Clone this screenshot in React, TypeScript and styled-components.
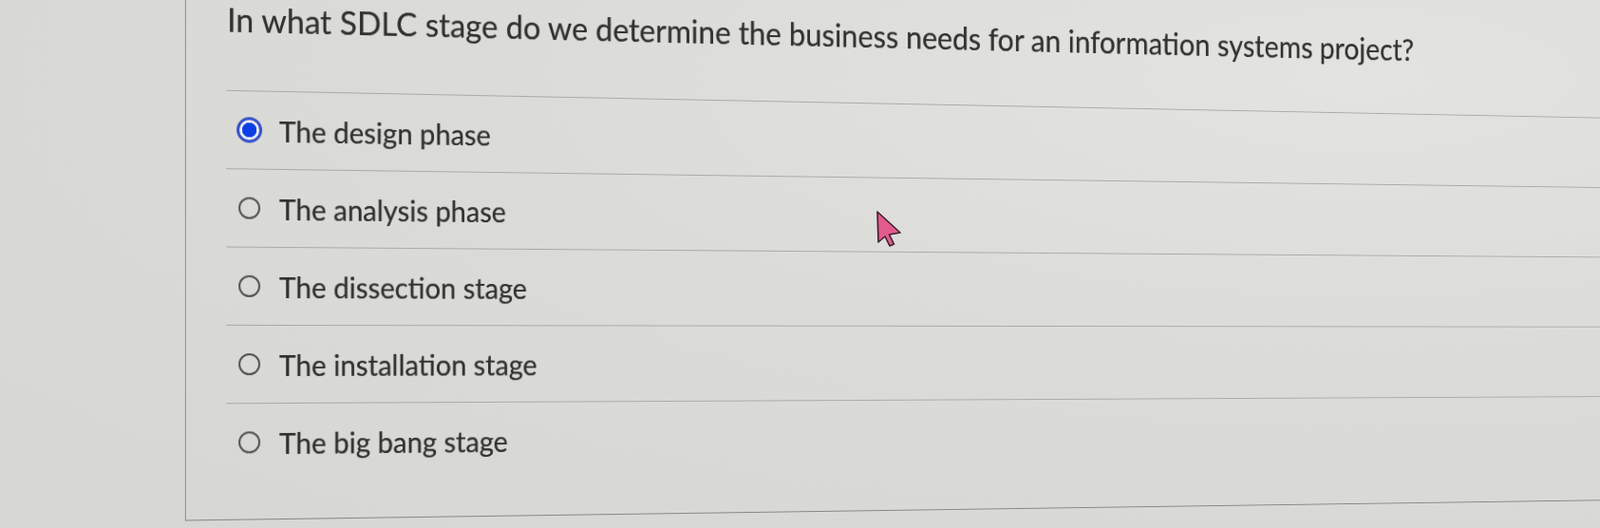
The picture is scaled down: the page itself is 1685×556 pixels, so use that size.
import React from "react";
import styled, { createGlobalStyle } from "styled-components";

const Global = createGlobalStyle`
  html, body { margin: 0; padding: 0; }
  body {
    background: #dcdcd8;
    font-family: Lato, "Open Sans", "Noto Sans", sans-serif;
  }
`;

const Viewport = styled.div`
  position: relative;
  width: 1685px;
  height: 556px;
  overflow: hidden;
  background: radial-gradient(ellipse at 85% 15%, #e3e3e1 0%, #dbdbd8 45%, #d6d6d2 100%);
`;

const Stage = styled.div`
  display: flex;
  width: 1900px;
  height: 620px;
  transform-origin: 300px 359px;
  transform: perspective(1500px) rotateY(6.5deg);
`;

const Gutter = styled.div`
  width: 195px;
  flex: none;
`;

const Panel = styled.div`
  flex: 1;
  height: 547px;
  box-sizing: border-box;
  border-left: 1.5px solid #8e8e8b;
  border-bottom: 1.5px solid #858582;
  padding-left: 42px;
  padding-top: 4px;
  display: flex;
  flex-direction: column;
`;

const Question = styled.div`
  font-size: 34px;
  line-height: 36px;
  color: #313131;
  text-shadow: 0 0 0.7px rgba(0, 0, 0, 0.5);
  padding-left: 1px;
  white-space: nowrap;
  margin-bottom: 56px;
`;

const List = styled.div`
  display: flex;
  flex-direction: column;
`;

const Row = styled.label`
  display: flex;
  align-items: center;
  height: 82px;
  box-sizing: border-box;
  border-top: 1px solid #a9a9a6;
  padding-left: 13px;
  gap: 20px;
  font-size: 30px;
  color: #313131;
  text-shadow: 0 0 0.7px rgba(0, 0, 0, 0.5);
`;

const Radio = styled.span<{ $checked?: boolean }>`
  flex: none;
  box-sizing: border-box;
  width: ${(p) => (p.$checked ? 27 : 23)}px;
  height: ${(p) => (p.$checked ? 27 : 23)}px;
  margin: ${(p) => (p.$checked ? "0 -2px" : "0")};
  border-radius: 50%;
  border: ${(p) => (p.$checked ? "3px solid #3550c8" : "2px solid #525252")};
  background: ${(p) =>
    p.$checked
      ? "radial-gradient(circle, #0b3ee6 0 7.5px, #f2f2f2 8px)"
      : "transparent"};
`;

const Cursor = styled.svg`
  position: absolute;
  left: 921px;
  top: 221px;
`;

const options = [
  "The design phase",
  "The analysis phase",
  "The dissection stage",
  "The installation stage",
  "The big bang stage",
];

export default function App() {
  return (
    <>
      <Global />
      <Viewport>
        <Stage>
          <Gutter />
          <Panel>
            <Question>
              In what SDLC stage do we determine the business needs for an information systems project?
            </Question>
            <List>
              {options.map((o, i) => (
                <Row key={o}>
                  <Radio $checked={i === 0} />
                  {o}
                </Row>
              ))}
            </List>
          </Panel>
        </Stage>
        <Cursor width="31" height="42" viewBox="-2 -2 31 42">
          <path
            d="M1 0 L2 32 L9 26 L14 36 L18.5 34 L13.5 24 L25 22 Z"
            fill="#e35a8c"
            stroke="#3b2230"
            strokeWidth="1.6"
            strokeLinejoin="round"
          />
        </Cursor>
      </Viewport>
    </>
  );
}
